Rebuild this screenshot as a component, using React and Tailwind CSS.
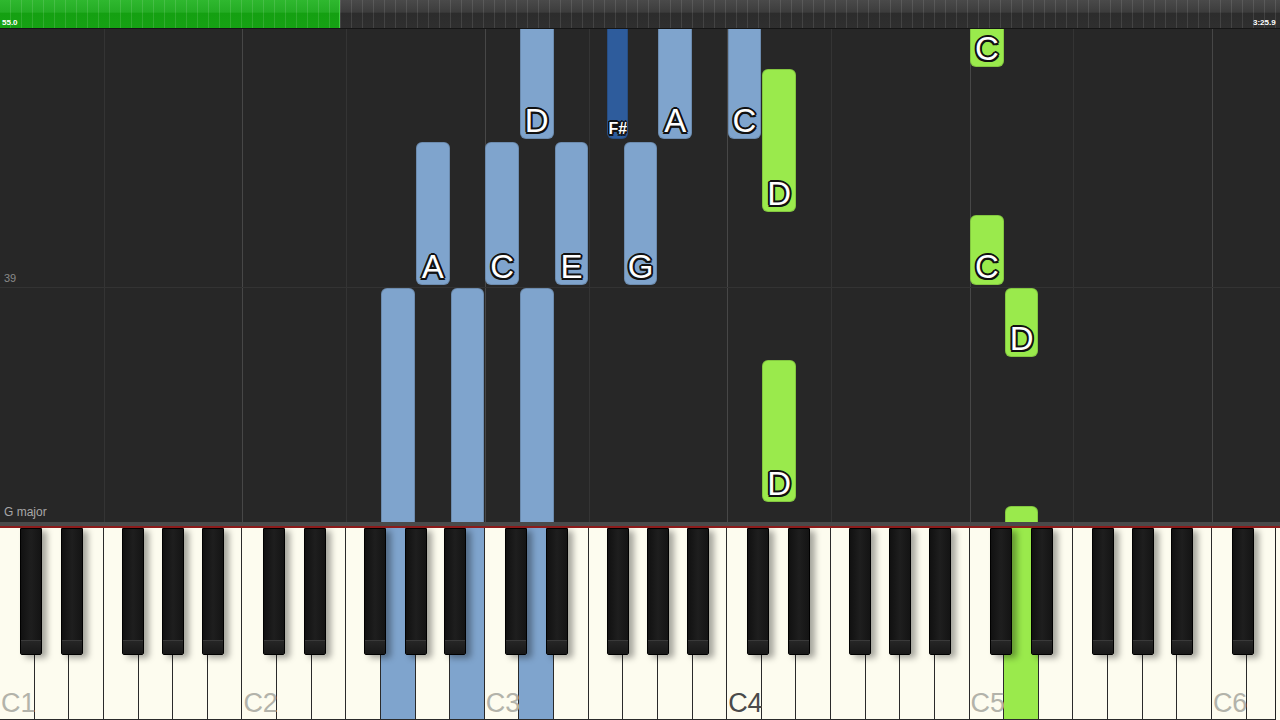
import React from 'react';

const W = 34.63;
const FONT = "font-['Liberation_Sans',Arial,sans-serif]";

// white key index -> x
const wx = (i) => i * W;
// black key offsets (px from the white boundary to the key centre)
const BLACK = [
  { after: 0, off: -3.5 },
  { after: 1, off: 3 },
  { after: 3, off: -5.5 },
  { after: 4, off: 0 },
  { after: 5, off: 5 },
];
const blackCenter = (oct, n) => {
  const b = BLACK.find((k) => k.after === n);
  return wx(oct * 7 + n + 1) + b.off;
};

const BLUE = 'bg-[#7fa4cd]';
const GREEN = 'bg-[#9aea4c]';

// roll is 493px tall, starting at y=29
const notes = [
  { w: 15, top: -10, bottom: 110, c: BLUE, label: 'D' },
  { b: [2, 3], top: -10, bottom: 110, c: 'bg-[#2e5c9c]', label: 'F#', small: true },
  { w: 19, top: -10, bottom: 110, c: BLUE, label: 'A' },
  { w: 21, top: -10, bottom: 110, c: BLUE, label: 'C' },
  { w: 22, top: 40, bottom: 183, c: GREEN, label: 'D' },
  { w: 12, top: 113, bottom: 256, c: BLUE, label: 'A' },
  { w: 14, top: 113, bottom: 256, c: BLUE, label: 'C' },
  { w: 16, top: 113, bottom: 256, c: BLUE, label: 'E' },
  { w: 18, top: 113, bottom: 256, c: BLUE, label: 'G' },
  { w: 11, top: 259, bottom: 510, c: BLUE },
  { w: 13, top: 259, bottom: 510, c: BLUE },
  { w: 15, top: 259, bottom: 510, c: BLUE },
  { w: 22, top: 331, bottom: 473, c: GREEN, label: 'D' },
  { w: 28, top: -10, bottom: 38, c: GREEN, label: 'C' },
  { w: 28, top: 186, bottom: 256, c: GREEN, label: 'C' },
  { w: 29, top: 259, bottom: 328, c: GREEN, label: 'D' },
  { w: 29, top: 477, bottom: 510, c: GREEN },
];

const pressed = { 11: BLUE, 13: BLUE, 15: BLUE, 29: GREEN };

const outline =
  '[text-shadow:-2px_0_#111,2px_0_#111,0_-2px_#111,0_2px_#111,-1.5px_-1.5px_#111,1.5px_-1.5px_#111,-1.5px_1.5px_#111,1.5px_1.5px_#111]';

const Note = ({ n }) => {
  let left, width;
  if (n.b) {
    left = blackCenter(n.b[0], n.b[1]) - 10.5;
    width = 21;
  } else {
    left = wx(n.w) + 0.5;
    width = W - 1;
  }
  return (
    <div
      className={`absolute ${n.c} rounded-[6px] border border-black/15 flex items-end justify-center overflow-hidden`}
      style={{ left, width, top: n.top, height: n.bottom - n.top }}
    >
      {n.label && (
        <span
          className={`${FONT} text-white ${outline} leading-none ${
            n.small ? 'text-[16px] font-bold mb-[1px]' : 'text-[33px] mb-[1px]'
          }`}
        >
          {n.label}
        </span>
      )}
    </div>
  );
};

const TopBar = () => (
  <div className="relative h-[29px] border-b border-[#151515] bg-[linear-gradient(#4a4a4a,#3c3c3c_44%,#2c2c2c_46%,#2f2f2f)] overflow-hidden">
    <div className="absolute inset-0 bg-[repeating-linear-gradient(90deg,transparent_0_10px,rgba(255,255,255,0.1)_10px_11px)]" />
    <div className="absolute left-0 top-0 bottom-0 w-[340px] border-r border-[#3fd03f] bg-[linear-gradient(#2fb82f,#24ac24_44%,#14a011_46%,#16a214)]">
      <div className="absolute inset-0 bg-[repeating-linear-gradient(90deg,transparent_0_10px,rgba(255,255,255,0.12)_10px_11px)]" />
    </div>
    <span className={`absolute left-[2px] top-[17px] ${FONT} text-[8px] font-bold text-white`}>55.0</span>
    <span className={`absolute left-[1253px] top-[17px] ${FONT} text-[8px] font-bold text-white whitespace-nowrap`}>3:25.9</span>
  </div>
);

const Roll = () => (
  <div className="relative h-[493px] bg-[#272727] overflow-hidden">
    <div className="absolute inset-0 flex">
      {Array.from({ length: 37 }).map((_, i) => (
        <div
          key={i}
          className={`w-[34.63px] shrink-0 h-full ${
            i > 0 && i % 7 === 0 ? 'border-l border-[#474747]' : i % 7 === 3 ? 'border-l border-[#343434]' : ''
          }`}
        />
      ))}
    </div>
    <div className="absolute left-0 right-0 top-[258px] h-px bg-[#333]" />
    <span className={`absolute left-[4px] top-[241px] ${FONT} text-[11px] text-[#8a8a8a]`}>39</span>
    <span className={`absolute left-[4px] top-[474px] ${FONT} text-[12px] text-[#a8a8a8]`}>G major</span>
    {notes.map((n, i) => (
      <Note key={i} n={n} />
    ))}
  </div>
);

const Keyboard = () => {
  const blacks = [];
  for (let o = 0; o < 6; o++) {
    BLACK.forEach((b) => {
      const c = blackCenter(o, b.after);
      if (c < 1276) blacks.push(c);
    });
  }
  return (
    <div>
      <div className="h-[4px] bg-[#4a4a4a]" />
      <div className="h-[2px] bg-[#8c1b1b]" />
      <div className="relative h-[192px] overflow-hidden bg-[#fdfcef]">
        <div className="flex h-full">
          {Array.from({ length: 37 }).map((_, i) => {
            const isC = i % 7 === 0;
            const lbl = isC ? `C${i / 7 + 1}` : null;
            return (
              <div
                key={i}
                className={`relative w-[34.63px] shrink-0 h-full border-r border-b border-[#2a2a2a] ${pressed[i] || 'bg-[#fdfcef]'}`}
              >
                {lbl && (
                  <span
                    className={`absolute left-[1px] bottom-[2px] ${FONT} text-[27px] leading-none ${
                      i === 21 ? 'text-[#4a4a4a]' : 'text-[#b3b3aa]'
                    }`}
                  >
                    {lbl}
                  </span>
                )}
              </div>
            );
          })}
        </div>
        {blacks.map((c, i) => (
          <div
            key={i}
            className="absolute top-0 h-[127px] w-[22px] rounded-b-[2px] border border-black bg-[linear-gradient(90deg,#111,#1e1e1e_50%,#141414)] shadow-[5px_3px_6px_rgba(0,0,0,0.35)] flex flex-col justify-end"
            style={{ left: c - 11 }}
          >
            <div className="h-[14px] border-t border-[#3a3a3a] bg-[linear-gradient(#262626,#181818)]" />
          </div>
        ))}
        <div className="absolute right-0 top-0 bottom-0 w-[5px] bg-[#fdfcef] border-l border-[#222]" />
      </div>
    </div>
  );
}

export default function App() {
  return (
    <div className="w-[1280px] h-[720px] overflow-hidden bg-[#272727]">
      <TopBar />
      <Roll />
      <Keyboard />
    </div>
  );
}
